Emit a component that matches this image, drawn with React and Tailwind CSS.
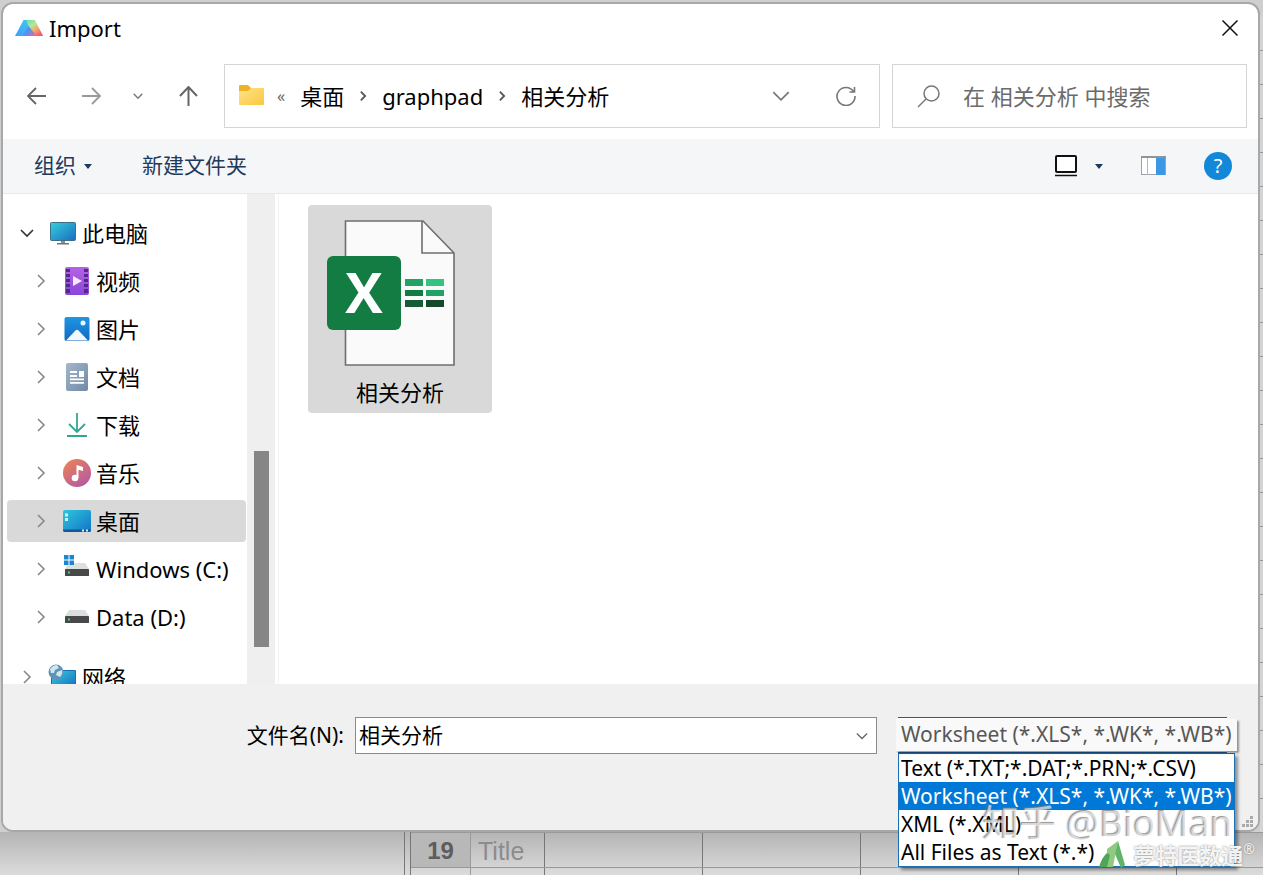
import React, { useState } from "react";

const places = [
  { name: "视频", icon: VideoIcon },
  { name: "图片", icon: PictureIcon },
  { name: "文档", icon: DocumentIcon },
  { name: "下载", icon: DownloadIcon },
  { name: "音乐", icon: MusicIcon },
  { name: "桌面", icon: DesktopIcon },
  { name: "Windows (C:)", icon: SystemDriveIcon },
  { name: "Data (D:)", icon: DriveIcon },
];

const fileTypes = [
  "Text (*.TXT;*.DAT;*.PRN;*.CSV)",
  "Worksheet (*.XLS*, *.WK*, *.WB*)",
  "XML (*.XML)",
  "All Files as Text (*.*)",
];

function Chevron({ dir = "right", size = 14, width = 2, className = "" }) {
  const d = dir === "right" ? "M4 1l6 6-6 6" : "M1 4l6 6 6-6";
  return (
    <svg width={size} height={size} viewBox="0 0 14 14" fill="none" stroke="currentColor" strokeWidth={width} className={`shrink-0 ${className}`}>
      <path d={d} />
    </svg>
  );
}

function PrismLogo() {
  return (
    <svg width="28" height="18" viewBox="0 0 28 18">
      <defs>
        <linearGradient id="prismL" x1="0" y1="1" x2="0.600" y2="0">
          <stop offset="0" stopColor="#3fa0fb" />
          <stop offset="1" stopColor="#3fc8ee" />
        </linearGradient>
        <linearGradient id="prismR" x1="0" y1="0" x2="0.700" y2="1">
          <stop offset="0" stopColor="#5fe0b8" />
          <stop offset="0.400" stopColor="#b9e88a" />
          <stop offset="0.700" stopColor="#f9a070" />
          <stop offset="1" stopColor="#f9586a" />
        </linearGradient>
        <linearGradient id="prismM" x1="0" y1="0" x2="1" y2="1">
          <stop offset="0" stopColor="#3f8ff5" />
          <stop offset="0.500" stopColor="#5f8df0" />
          <stop offset="1" stopColor="#f0688a" />
        </linearGradient>
      </defs>
      <path d="M8.500 1h11L28 17H0z" fill="url(#prismL)" />
      <path d="M11 1h8.500L28 17h-8l-6-9z" fill="url(#prismR)" />
      <path d="M13.500 7l8 10H8z" fill="url(#prismM)" />
    </svg>
  );
}

function FolderIcon() {
  return (
    <svg width="26" height="22" viewBox="0 0 26 22" className="shrink-0">
      <defs>
        <linearGradient id="folder" x1="0" y1="0" x2="1" y2="1">
          <stop offset="0" stopColor="#ffe28a" />
          <stop offset="1" stopColor="#fbc83f" />
        </linearGradient>
      </defs>
      <path d="M0 1q0-1 1-1h8l3 3h12q1 0 1 1v6H0z" fill="#eeb324" />
      <path d="M0 6h9l3-3h12q1 0 1 1v15q0 1-1 1H1q-1 0-1-1z" fill="url(#folder)" />
    </svg>
  );
}

function ComputerIcon() {
  return (
    <svg width="26" height="24" viewBox="0 0 26 24" className="shrink-0">
      <defs>
        <linearGradient id="screen" x1="0" y1="0" x2="1" y2="1">
          <stop offset="0" stopColor="#35cfdc" />
          <stop offset="1" stopColor="#1a6cc0" />
        </linearGradient>
      </defs>
      <rect x="0.500" y="1.500" width="25" height="18" rx="1" fill="url(#screen)" stroke="#3b6f8a" />
      <path d="M11 20h4v2h-4z" fill="#8a8f94" />
      <path d="M7 22h12v1.500H7z" fill="#6e7377" />
    </svg>
  );
}

function VideoIcon() {
  return (
    <svg width="26" height="28" viewBox="0 0 26 28">
      <defs>
        <linearGradient id="video" x1="0" y1="0" x2="0" y2="1">
          <stop offset="0" stopColor="#b563e6" />
          <stop offset="1" stopColor="#8a45d8" />
        </linearGradient>
      </defs>
      <rect x="1" width="24" height="28" rx="2" fill="url(#video)" />
      <path d="M2 2h4v3H2zM2 7h4v3H2zM2 12h4v3H2zM2 17h4v3H2zM2 22h4v4H2zM20 2h4v3h-4zM20 7h4v3h-4zM20 12h4v3h-4zM20 17h4v3h-4zM20 22h4v4h-4z" fill="#4f2a86" />
      <path d="M9 9l9 5-9 5z" fill="#f6eafc" />
    </svg>
  );
}

function PictureIcon() {
  return (
    <svg width="26" height="26" viewBox="0 0 26 26">
      <defs>
        <linearGradient id="picture" x1="0" y1="0" x2="0" y2="1">
          <stop offset="0" stopColor="#1d97e4" />
          <stop offset="1" stopColor="#1368c2" />
        </linearGradient>
      </defs>
      <rect x="0.500" y="1" width="25" height="24" rx="2" fill="url(#picture)" />
      <path d="M2 24.500l9.500-10q1.500-1.500 3 0l9.500 10z" fill="#f1f9ff" />
      <circle cx="19" cy="7" r="2.500" fill="#eaf6ff" />
    </svg>
  );
}

function DocumentIcon() {
  return (
    <svg width="26" height="28" viewBox="0 0 26 28">
      <defs>
        <linearGradient id="doc" x1="0" y1="0" x2="1" y2="1">
          <stop offset="0" stopColor="#a3b7cc" />
          <stop offset="1" stopColor="#7089a6" />
        </linearGradient>
      </defs>
      <rect x="2" width="22" height="28" rx="2" fill="url(#doc)" />
      <path d="M6 8h7v2H6zM6 12h7v2H6zM15 8h5v6h-5zM6 15.500h14v1.800H6zM6 19h14v1.800H6z" fill="#fff" />
    </svg>
  );
}

function DownloadIcon() {
  return (
    <svg width="26" height="26" viewBox="0 0 26 26" fill="none" stroke="#2fa893" strokeWidth="1.800">
      <path d="M13 1v19M5 12l8 8 8-8M3 24h20" />
    </svg>
  );
}

function MusicIcon() {
  return (
    <svg width="28" height="28" viewBox="0 0 28 28">
      <defs>
        <linearGradient id="music" x1="0" y1="0" x2="0.700" y2="1">
          <stop offset="0" stopColor="#ee8650" />
          <stop offset="1" stopColor="#b65aa2" />
        </linearGradient>
      </defs>
      <circle cx="14" cy="14" r="14" fill="url(#music)" />
      <circle cx="12" cy="19" r="3.300" fill="#fff" />
      <path d="M13.500 6l6.500 2v4l-4.500-1.300V19h-2z" fill="#fff" />
    </svg>
  );
}

function DesktopIcon() {
  return (
    <svg width="28" height="22" viewBox="0 0 28 22">
      <defs>
        <linearGradient id="desk" x1="0" y1="0" x2="1" y2="1">
          <stop offset="0" stopColor="#2fc6dd" />
          <stop offset="1" stopColor="#1273c6" />
        </linearGradient>
      </defs>
      <rect width="28" height="22" rx="2" fill="url(#desk)" />
      <path d="M0 19.500h28V20q0 2-2 2H2q-2 0-2-2z" fill="#12599c" />
      <path d="M2 3.500h3v3H2zM2 8h3v3H2zM19 19.500h2v2h-2zM23 19.500h2v2h-2z" fill="#d4f6fb" />
    </svg>
  );
}

function DriveIcon() {
  return (
    <svg width="26" height="14" viewBox="0 0 26 14">
      <path d="M5 0h16l4 6H1z" fill="#dcdee0" />
      <rect x="1" y="6" width="24" height="7" rx="0.500" fill="#47494b" />
      <path d="M4 8.500h2v2H4z" fill="#49d06e" />
    </svg>
  );
}

function SystemDriveIcon() {
  return (
    <svg width="26" height="22" viewBox="0 0 26 22" className="mb-1.5">
      <path d="M5 8h16l4 6H1z" fill="#dcdee0" />
      <rect x="1" y="14" width="24" height="7" rx="0.500" fill="#47494b" />
      <path d="M4 16.500h2v2H4z" fill="#49d06e" />
      <path d="M0 0h10v10H0z" fill="#fff" />
      <path d="M0 0h4.500v4.500H0zM5.500 0H10v4.500H5.500zM0 5.500h4.500V10H0zM5.500 5.500H10V10H5.500z" fill="#1b86d0" />
    </svg>
  );
}

function NetworkIcon() {
  return (
    <svg width="28" height="26" viewBox="0 0 28 26" className="shrink-0">
      <rect x="3" y="6" width="25" height="18" rx="1" fill="#176fb5" />
      <rect x="4" y="7" width="23" height="16" fill="url(#screen)" />
      <circle cx="8" cy="8" r="7.500" fill="#5d93b5" />
      <path d="M2 5q3-4 7-4l2 3-4 2-1 3-3 0zM9 8l5-2q1 4-2 7l-4-2z" fill="#cfe6ef" />
    </svg>
  );
}

function ExcelFileIcon() {
  return (
    <svg width="128" height="146" viewBox="0 0 128 146">
      <path d="M18.500 1H96l31 32v112H18.500z" fill="#fafafa" stroke="#6f6f6f" strokeWidth="1.600" />
      <path d="M95 1v32h32" fill="none" stroke="#6f6f6f" strokeWidth="1.600" />
      <rect y="36" width="74" height="74" rx="6" fill="#127c42" />
      <text x="37" y="93" textAnchor="middle" fill="#fff" fontSize="56" fontWeight="700" fontFamily="Open Sans, sans-serif">X</text>
      <path d="M78 59h18v7H78z" fill="#21a366" />
      <path d="M99 59h18v7H99z" fill="#33c481" />
      <path d="M78 70h18v6H78z" fill="#107c41" />
      <path d="M99 70h18v6H99z" fill="#21a366" />
      <path d="M78 80h18v7H78z" fill="#185c37" />
      <path d="M99 80h18v7H99z" fill="#134a2c" />
    </svg>
  );
}

function TitleBar() {
  return (
    <header className="flex h-[60px] shrink-0 items-start justify-between pl-3 pr-5 pt-2">
      <h1 className="flex items-center gap-1.5 text-[22px] leading-8">
        <PrismLogo />
        Import
      </h1>
      <button type="button" aria-label="Close" className="mt-2">
        <svg width="16" height="16" viewBox="0 0 16 16" stroke="#111" strokeWidth="1.500">
          <path d="M0.500 0.500l15 15M15.500 0.500l-15 15" />
        </svg>
      </button>
    </header>
  );
}

function NavBar() {
  return (
    <nav className="flex h-[75px] shrink-0 items-start gap-3 pr-[11px]">
      <div className="flex h-16 flex-1 items-center">
        <div className="flex w-[221px] shrink-0 items-center pl-6">
          <button type="button" aria-label="Back" className="mr-9 text-[#666]">
            <svg width="19" height="18" viewBox="0 0 19 18" fill="none" stroke="currentColor" strokeWidth="1.800">
              <path d="M9 1L1 9l8 8M1 9h18" />
            </svg>
          </button>
          <button type="button" aria-label="Forward" className="mr-8 text-[#999]">
            <svg width="19" height="18" viewBox="0 0 19 18" fill="none" stroke="currentColor" strokeWidth="1.800">
              <path d="M10 1l8 8-8 8M18 9H0" />
            </svg>
          </button>
          <button type="button" aria-label="Recent locations" className="mr-9 text-[#777]">
            <Chevron dir="down" size={10} width={2} />
          </button>
          <button type="button" aria-label="Up" className="text-[#666]">
            <svg width="19" height="20" viewBox="0 0 19 20" fill="none" stroke="currentColor" strokeWidth="2">
              <path d="M1 10l8.500-9L18 10M9.500 1v19" />
            </svg>
          </button>
        </div>
        <div className="flex h-16 flex-1 items-center border border-[#d4d4d4] pl-3.5 pr-[23px] text-[22px]">
          <FolderIcon />
          <span className="ml-3 mr-[15px] text-base text-[#666]">«</span>
          <a href="#desktop">桌面</a>
          <Chevron size={10} width={2.5} className="mx-3.5 text-[#555]" />
          <a href="#graphpad">graphpad</a>
          <Chevron size={10} width={2.5} className="mx-3.5 text-[#555]" />
          <a href="#current">相关分析</a>
          <button type="button" aria-label="Previous locations" className="ml-auto text-[#777]">
            <Chevron dir="down" size={18} width={1.3} />
          </button>
          <button type="button" aria-label="Refresh" className="ml-[46px] text-[#777]">
            <svg width="20" height="20" viewBox="0 0 20 20" fill="none" stroke="currentColor" strokeWidth="1.600">
              <path d="M17.500 5.500A9 9 0 1 0 19 10M18.500 1v5h-5" />
            </svg>
          </button>
        </div>
      </div>
      <label className="flex h-16 w-[355px] items-center border border-[#d4d4d4] pl-6">
        <svg width="23" height="23" viewBox="0 0 23 23" fill="none" stroke="#777" strokeWidth="1.500" className="shrink-0">
          <circle cx="14.500" cy="8.500" r="7.500" />
          <path d="M9 14l-8 8" />
        </svg>
        <input
          type="text"
          aria-label="Search"
          placeholder="在 相关分析 中搜索"
          className="ml-[23px] min-w-0 flex-1 text-[22px] outline-none placeholder:text-[#6b6b6b]"
        />
      </label>
    </nav>
  );
}

function Toolbar() {
  return (
    <div className="flex h-[55px] shrink-0 items-center border-b border-[#e6e8ea] bg-[#f4f6f8] pl-[31px] pr-[26px] text-[21px] text-[#1e395b]">
      <button type="button" className="flex items-center gap-2">
        组织
        <svg width="8" height="5" viewBox="0 0 8 5" fill="currentColor">
          <path d="M0 0h8L4 5z" />
        </svg>
      </button>
      <button type="button" className="ml-[50px]">新建文件夹</button>
      <button type="button" aria-label="Change view" className="ml-auto flex items-center gap-[18px]">
        <svg width="22" height="22" viewBox="0 0 22 22" fill="none" stroke="#111" strokeWidth="2">
          <rect x="1" y="1" width="20" height="16" rx="1" fill="#fff" />
          <path d="M0 20.500h22" strokeWidth="1.500" />
        </svg>
        <svg width="8" height="5" viewBox="0 0 8 5" fill="currentColor">
          <path d="M0 0h8L4 5z" />
        </svg>
      </button>
      <button type="button" aria-label="Preview pane" className="ml-[38px]">
        <svg width="25" height="20" viewBox="0 0 25 20">
          <rect x="0.500" y="0.500" width="24" height="18" fill="#fff" stroke="#9ca3aa" />
          <path d="M0 0h25v2H0z" fill="#8d949b" />
          <path d="M6.500 2v17" stroke="#b5babf" />
          <path d="M15 2h9v17h-9z" fill="#3c98e4" />
        </svg>
      </button>
      <button
        type="button"
        aria-label="Help"
        className="ml-[38px] h-7 w-7 rounded-full bg-[#1488d8] text-[20px] leading-7 text-white"
      >
        ?
      </button>
    </div>
  );
}

function Sidebar({ selected, onSelect }) {
  return (
    <aside className="flex w-[272px] shrink-0 overflow-hidden">
      <ul className="flex flex-1 flex-col gap-1.5 pl-1 pr-px pt-[18px] text-[22px]">
        <li>
          <button type="button" className="flex h-[42px] w-full items-center pl-[13px]">
            <Chevron dir="down" size={14} width={1.6} className="text-[#333]" />
            <span className="ml-4 mr-1.5"><ComputerIcon /></span>
            此电脑
          </button>
        </li>
        {places.map(({ name, icon: Icon }) => (
          <li key={name}>
            <button
              type="button"
              onClick={() => onSelect(name)}
              className={`flex h-[42px] w-full items-center whitespace-nowrap rounded-sm pl-[27px] ${selected === name ? "bg-[#d9d9d9]" : ""}`}
            >
              <Chevron size={14} width={1.6} className="text-[#888]" />
              <span className="ml-3.5 mr-1 flex w-[30px] shrink-0 justify-center"><Icon /></span>
              {name}
            </button>
          </li>
        ))}
        <li className="mt-3">
          <button type="button" className="flex h-[42px] w-full items-center pl-[13px]">
            <Chevron size={14} width={1.6} className="text-[#888]" />
            <span className="ml-3.5 mr-1.5"><NetworkIcon /></span>
            网络
          </button>
        </li>
      </ul>
      <div className="flex w-7 shrink-0 flex-col items-center bg-[#efefef] pt-[257px]">
        <div className="h-[196px] w-[15px] bg-[#868686]" />
      </div>
    </aside>
  );
}

function SizeGrip() {
  return (
    <svg width="12" height="12" viewBox="0 0 12 12" fill="#aaa" className="absolute bottom-0.5 right-1">
      <path d="M8 0h3v3H8zM4 4h3v3H4zM8 4h3v3H8zM0 8h3v3H0zM4 8h3v3H4zM8 8h3v3H8z" />
    </svg>
  );
}

function Footer({ fileName, setFileName, fileType, setFileType }) {
  return (
    <footer className="relative flex h-[146px] shrink-0 items-start rounded-b-[10px] bg-[#f0f0f0] pr-[23px] pt-[33px] text-[21px]">
      <label htmlFor="file-name" className="w-[341px] shrink-0 text-right leading-9">文件名(N):</label>
      <div className="ml-[11px] flex h-[37px] flex-1 items-center border border-[#8a8a8a] bg-white pr-2">
        <input
          id="file-name"
          type="text"
          value={fileName}
          onChange={(e) => setFileName(e.target.value)}
          className="min-w-0 flex-1 pl-[3px] outline-none"
        />
        <Chevron dir="down" size={12} width={1.5} className="text-[#666]" />
      </div>
      <div className="relative ml-[21px] w-[337px] shrink-0">
        <select
          aria-label="File type"
          value={fileType}
          onChange={(e) => setFileType(e.target.value)}
          className="block h-9 w-[329px] appearance-none border-y border-[#1d5f9e] bg-white text-transparent"
        >
          {fileTypes.map((t) => (
            <option key={t}>{t}</option>
          ))}
        </select>
        {/* full-name tip over the closed box */}
        <div className="absolute -left-0.5 top-0.5 z-10 h-8 w-[341px] whitespace-nowrap bg-[#f9f9f9] pl-[5px] leading-[30px] text-[#575757] shadow-[2px_2px_2px_rgba(0,0,0,0.4)]">
          {fileType}
        </div>
        <ul role="listbox" className="absolute left-0 top-9 w-[337px] border border-[#1a6fb5] bg-white leading-7 shadow-[3px_3px_3px_rgba(0,0,0,0.4)]">
          {fileTypes.map((t) => (
            <li key={t} role="option" aria-selected={t === fileType}>
              <button
                type="button"
                onClick={() => setFileType(t)}
                className={`block h-7 w-full whitespace-nowrap pl-0.5 text-left ${t === fileType ? "bg-[#0078d7] text-white" : "text-black"}`}
              >
                {t}
              </button>
            </li>
          ))}
        </ul>
      </div>
      <SizeGrip />
    </footer>
  );
}

function SheetStrip() {
  return (
    <div className="flex h-[43px] shrink-0 bg-gradient-to-b from-[#b4b4b4] to-[#dcdcdc] font-['Liberation_Sans',sans-serif]">
      <div className="w-[405px] border-r border-[#777]" />
      <div className="w-1.5 border-r border-[#777]" />
      <div className="flex flex-1 flex-col">
        <div className="flex h-9 border-y border-[#999]">
          <div className="w-[60px] border-r border-[#999] bg-[#b8b8b8] text-center text-2xl leading-9 font-bold text-[#5d5d5d]">19</div>
          <div className="w-[74px] border-r border-[#777] pl-[7px] text-[25px] leading-9 text-[#8c8c8c]">Title</div>
          <div className="w-[158px] border-r border-[#777]" />
          <div className="w-[158px] border-r border-[#777]" />
          <div className="w-[158px] border-r border-[#777]" />
          <div className="w-[158px] border-r border-[#777]" />
        </div>
        <div className="flex flex-1">
          <div className="w-[60px] border-r border-[#999]" />
          <div className="w-[74px] border-r border-[#777]" />
          <div className="w-[158px] border-r border-[#777]" />
          <div className="w-[158px] border-r border-[#777]" />
          <div className="w-[158px] border-r border-[#777]" />
          <div className="w-[158px] border-r border-[#777]" />
        </div>
      </div>
    </div>
  );
}

function Watermark() {
  return (
    <div className="pointer-events-none absolute bottom-1.5 right-0 z-30 flex flex-col items-end pr-2">
      <p className="pr-[22px] text-[37px] leading-[36px] text-white/60 [text-shadow:-1px_-1px_0px_rgba(120,120,120,0.6),-2px_-1px_1px_rgba(120,120,120,0.35)]">知乎 @BioMan</p>
      <p className="flex items-center text-[22px] leading-7 font-bold text-white/90 [text-shadow:0_0_2px_#777]">
        <svg width="30" height="28" viewBox="0 0 30 28" className="mr-1">
          <path d="M8 8L19 0l-2 10-3 16H8z" fill="#8fca80" />
          <path d="M0 26Q3 16 8 12l3 2-3 12z" fill="#4fa45a" />
          <path d="M19 0l7 24-4 3-6-14z" fill="#5fb46a" />
        </svg>
        夢特医数通
        <span className="self-start text-sm leading-4 font-normal">®</span>
      </p>
    </div>
  );
}

export default function App() {
  const [place, setPlace] = useState("桌面");
  const [fileName, setFileName] = useState("相关分析");
  const [fileType, setFileType] = useState(fileTypes[1]);

  return (
    <div className="relative flex h-screen flex-col overflow-hidden bg-[#cfcfcf] font-['Noto_Sans','Noto_Sans_CJK_SC',sans-serif] text-black">
      <div className="relative z-20 flex min-h-0 flex-1">
        <main className="ml-px mt-0.5 flex min-w-0 flex-1 flex-col rounded-xl border-2 border-[#a8a8a8] bg-white">
          <TitleBar />
          <NavBar />
          <Toolbar />
          <div className="flex min-h-0 flex-1">
            <Sidebar selected={place} onSelect={setPlace} />
            <div className="w-1 shrink-0 border-r border-[#f3f3f3]" />
            <section className="flex-1 pl-[29px] pt-[11px]">
              <button type="button" className="flex h-[208px] w-[184px] flex-col items-center rounded-sm bg-[#d9d9d9] pt-[15px] text-[22px]">
                <span className="mr-[18px]"><ExcelFileIcon /></span>
                <span className="mt-2 leading-9">相关分析</span>
              </button>
            </section>
          </div>
          <Footer fileName={fileName} setFileName={setFileName} fileType={fileType} setFileType={setFileType} />
        </main>
        <div className="mt-[17px] w-[3px] bg-[repeating-linear-gradient(to_bottom,#d4d4d4_0_33px,#999_33px_34px)]" />
      </div>
      <SheetStrip />
      <Watermark />
    </div>
  );
}
